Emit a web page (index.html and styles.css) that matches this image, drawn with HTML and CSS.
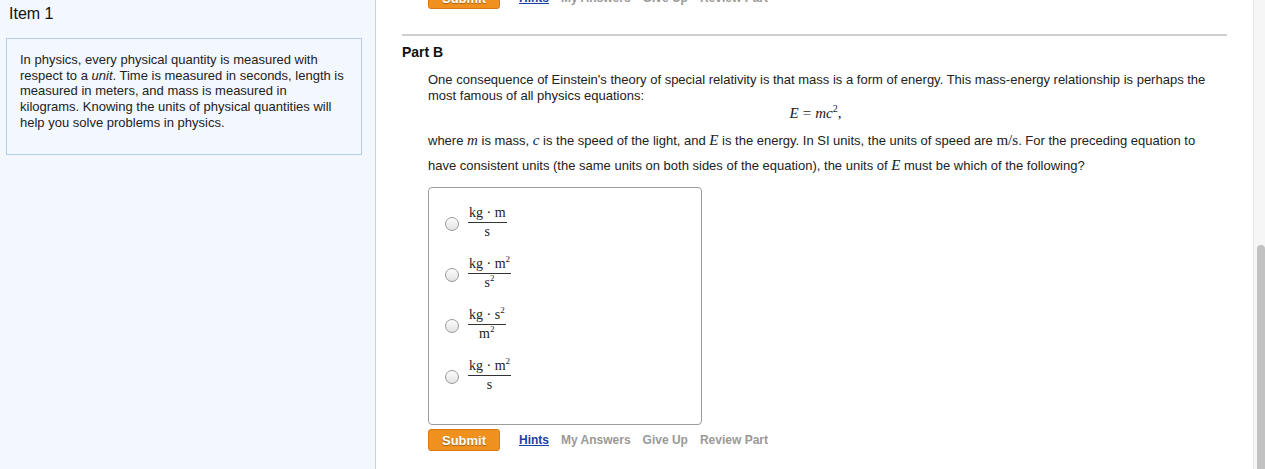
FILE: index.html
```html
<!DOCTYPE html>
<html>
<head>
<meta charset="utf-8">
<link rel="stylesheet" href="styles.css">
</head>
<body>
<div class="page">
  <aside class="sidebar">
    <h1 class="item-title">Item 1</h1>
    <div class="intro">
      <p>In physics, every physical quantity is measured with respect to a <em>unit</em>. Time is measured in seconds, length is measured in meters, and mass is measured in kilograms. Knowing the units of physical quantities will help you solve problems in physics.</p>
    </div>
  </aside>
  <main class="main">
    <div class="prev-actions">
      <div class="actions">
        <button class="submit">Submit</button>
        <a class="link hints">Hints</a>
        <a class="link">My Answers</a>
        <a class="link">Give Up</a>
        <a class="link">Review Part</a>
      </div>
    </div>
    <hr class="divider">
    <h2 class="part-title">Part B</h2>
    <div class="question">
      <p class="para">One consequence of Einstein's theory of special relativity is that mass is a form of energy. This mass-energy relationship is perhaps the most famous of all physics equations:</p>
      <div class="display-eq"><span class="mi">E</span><span class="mo">=</span><span class="mi">m</span><span class="mi">c</span><sup class="sup">2</sup><span class="mn">,</span></div>
      <p class="para para-math">where <span class="mi">m</span> is mass, <span class="mi">c</span> is the speed of the light, and <span class="mi">E</span> is the energy. In SI units, the units of speed are <span class="mr">m/s</span>. For the preceding equation to have consistent units (the same units on both sides of the equation), the units of <span class="mi">E</span> must be which of the following?</p>
    </div>
    <div class="choices">
      <label class="choice"><span class="radio"></span>
        <span class="frac"><span class="num">kg · m</span><span class="den">s</span></span></label>
      <label class="choice"><span class="radio"></span>
        <span class="frac"><span class="num">kg · m<sup>2</sup></span><span class="den">s<sup>2</sup></span></span></label>
      <label class="choice"><span class="radio"></span>
        <span class="frac"><span class="num">kg · s<sup>2</sup></span><span class="den">m<sup>2</sup></span></span></label>
      <label class="choice"><span class="radio"></span>
        <span class="frac"><span class="num">kg · m<sup>2</sup></span><span class="den">s</span></span></label>
    </div>
    <div class="actions bottom-actions">
      <button class="submit">Submit</button>
      <a class="link hints">Hints</a>
      <a class="link">My Answers</a>
      <a class="link">Give Up</a>
      <a class="link">Review Part</a>
    </div>
  </main>
  <div class="scrollbar"><div class="thumb"></div></div>
</div>
</body>
</html>
```

FILE: styles.css
```css
html, body {
  margin: 0;
  padding: 0;
  height: 100%;
  overflow: hidden;
}
body {
  font-family: "Liberation Sans", Arial, sans-serif;
  color: #222;
  background: #fff;
}
.page {
  display: flex;
  height: 469px;
}
.sidebar {
  width: 375px;
  flex: none;
  background: #f3f8ff;
  border-right: 1px solid #c5d4e4;
  box-sizing: content-box;
}
.item-title {
  margin: 0;
  padding: 5px 0 0 9px;
  font-size: 16px;
  font-weight: normal;
  line-height: 18px;
  color: #111;
}
.intro {
  margin: 15px 0 0 6px;
  width: 354px;
  height: 115px;
  border: 1px solid #b9cde2;
  box-sizing: content-box;
}
.intro p {
  margin: 13px 14px 0 13px;
  font-size: 13px;
  line-height: 15.7px;
  color: #222;
}
.main {
  flex: 1;
  padding: 0 26px;
  min-width: 0;
}
.prev-actions {
  height: 9px;
  overflow: hidden;
  display: flex;
  align-items: flex-end;
  padding-left: 26px;
}
.actions {
  display: flex;
  align-items: center;
  gap: 12px;
}
.submit {
  width: 72px;
  height: 22px;
  margin-right: 7px;
  background: #f0901f;
  border: 1px solid #d77a12;
  border-radius: 3px;
  color: #fff;
  font-family: "Liberation Sans", Arial, sans-serif;
  font-weight: bold;
  font-size: 13px;
  text-shadow: 0 1px 1px rgba(0,0,0,0.35);
  padding: 0;
}
.link {
  font-size: 12px;
  font-weight: bold;
  color: #999;
}
.hints {
  color: #1b3fa0;
  text-decoration: underline;
}
.divider {
  margin: 25px 0 0 0;
  border: none;
  border-top: 2px solid #cfcfcf;
  height: 0;
}
.part-title {
  margin: 8px 0 0 0;
  font-size: 14px;
  font-weight: bold;
  line-height: 16px;
  color: #111;
}
.question {
  padding: 0 15px 0 26px;
  margin-top: 12px;
}
.para {
  margin: 0;
  font-size: 13px;
  line-height: 16px;
  color: #222;
}
.para-math {
  line-height: 24px;
  margin-top: 6px;
}
.display-eq {
  text-align: center;
  font-family: "Liberation Serif", "Times New Roman", serif;
  font-size: 15px;
  line-height: 18px;
  margin-top: -4px;
  padding-right: 9px;
}
.mi {
  font-family: "Liberation Serif", "Times New Roman", serif;
  font-style: italic;
  font-size: 15px;
}
.mr {
  font-family: "Liberation Serif", "Times New Roman", serif;
  font-size: 15px;
}
.mo {
  margin: 0 4px;
}
.sup {
  font-size: 10px;
}
.choices {
  margin: 9px 0 0 26px;
  width: 272px;
  height: 228px;
  border: 1px solid #9c9c9c;
  border-radius: 4px;
  padding-top: 8px;
  box-sizing: content-box;
}
.choice {
  display: flex;
  align-items: center;
  height: 51px;
  padding-left: 16px;
}
.radio {
  width: 12px;
  height: 12px;
  border-radius: 50%;
  border: 1px solid #9a9a9a;
  background: linear-gradient(#fdfdfd, #e2e2e2);
  margin-right: 9px;
  margin-top: 4px;
}
.frac {
  display: inline-flex;
  flex-direction: column;
  align-items: center;
  font-family: "Liberation Serif", "Times New Roman", serif;
  font-size: 14px;
  color: #222;
}
.num {
  padding: 0 1px 2px;
  border-bottom: 1px solid #333;
  line-height: 15px;
  white-space: nowrap;
}
.den {
  line-height: 15px;
  padding-top: 1px;
}
.frac sup {
  font-size: 9px;
  line-height: 0;
}
.bottom-actions {
  margin: 4px 0 0 26px;
}
.scrollbar {
  width: 11px;
  flex: none;
  background: #f6f6f6;
  border-left: 1px solid #e6e6e6;
  position: relative;
}
.thumb {
  position: absolute;
  left: 3px;
  right: 0;
  top: 245px;
  bottom: -10px;
  background: #c2c2c2;
  border-radius: 5px;
}
```
